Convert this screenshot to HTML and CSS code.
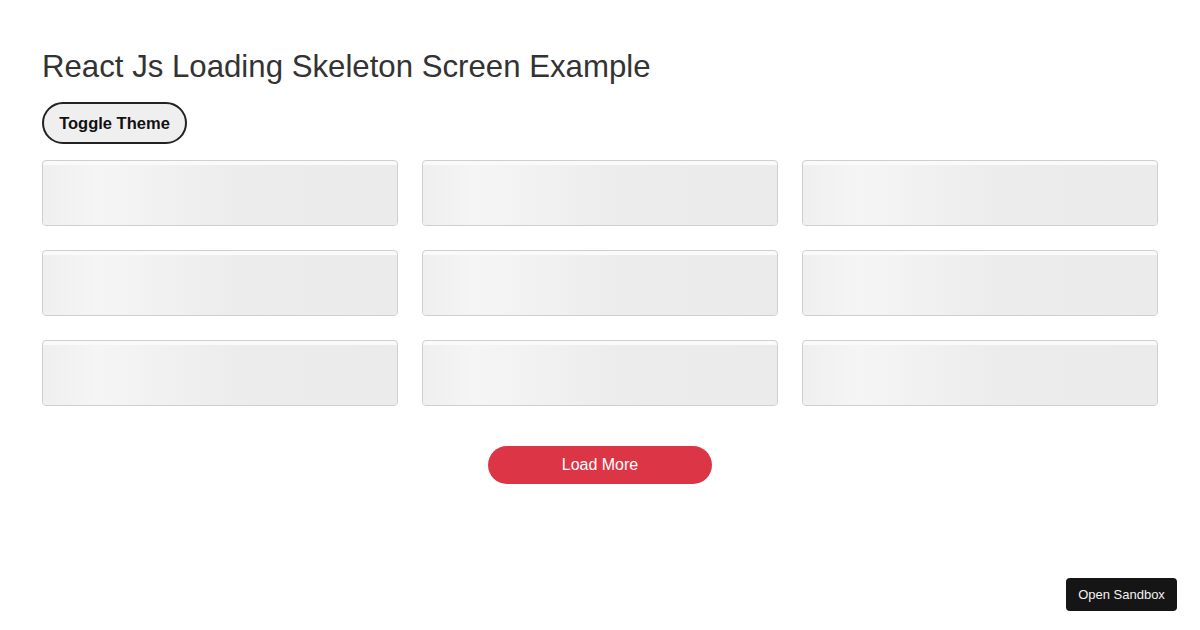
FILE: index.html
```html
<!DOCTYPE html>
<html>
<head>
<meta charset="utf-8">
<link rel="stylesheet" href="styles.css">
</head>
<body>
<div class="page">
  <h1 class="title">React Js Loading Skeleton Screen Example</h1>
  <button class="toggle">Toggle Theme</button>
  <div class="grid">
    <div class="card"><div class="shimmer"></div></div>
    <div class="card"><div class="shimmer"></div></div>
    <div class="card"><div class="shimmer"></div></div>
    <div class="card"><div class="shimmer"></div></div>
    <div class="card"><div class="shimmer"></div></div>
    <div class="card"><div class="shimmer"></div></div>
    <div class="card"><div class="shimmer"></div></div>
    <div class="card"><div class="shimmer"></div></div>
    <div class="card"><div class="shimmer"></div></div>
  </div>
  <div class="more-row"><button class="load-more">Load More</button></div>
</div>
<a class="sandbox">Open Sandbox</a>
</body>
</html>
```
FILE: styles.css
```css
html, body {
  margin: 0;
  padding: 0;
  background: #fff;
  font-family: "Liberation Sans", Arial, sans-serif;
}
.page {
  padding: 48px 42px 0 42px;
}
.title {
  margin: 0;
  font-size: 31.2px;
  font-weight: 400;
  color: #333;
  line-height: 38px;
}
.toggle {
  margin-top: 16px;
  height: 42px;
  width: 145px;
  padding: 0;
  border: 2px solid #222;
  border-radius: 21px;
  background: #efefef;
  font-family: "Liberation Sans", Arial, sans-serif;
  font-weight: 700;
  font-size: 16.5px;
  color: #111;
}
.grid {
  margin-top: 16px;
  display: grid;
  grid-template-columns: repeat(3, 1fr);
  gap: 24px;
}
.card {
  height: 66px;
  box-sizing: border-box;
  border: 1px solid #cfcfcf;
  border-radius: 4px;
  padding-top: 4px;
  background: #fafafa;
  overflow: hidden;
}
.shimmer {
  height: 100%;
  background: linear-gradient(90deg, #efefef 0%, #f5f5f5 15%, #f3f3f3 25%, #ececec 55%, #ebebeb 100%);
}
.more-row {
  display: flex;
  justify-content: center;
  margin-top: 40px;
}
.load-more {
  width: 224px;
  height: 38px;
  border: none;
  border-radius: 19px;
  background: #dc3545;
  color: #fff;
  font-family: "Liberation Sans", Arial, sans-serif;
  font-size: 16px;
}
.sandbox {
  position: fixed;
  right: 23px;
  bottom: 19px;
  width: 111px;
  height: 33px;
  box-sizing: border-box;
  display: flex;
  align-items: center;
  justify-content: center;
  background: #151515;
  color: #f2f2f2;
  border-radius: 4px;
  font-size: 13px;
}
```
